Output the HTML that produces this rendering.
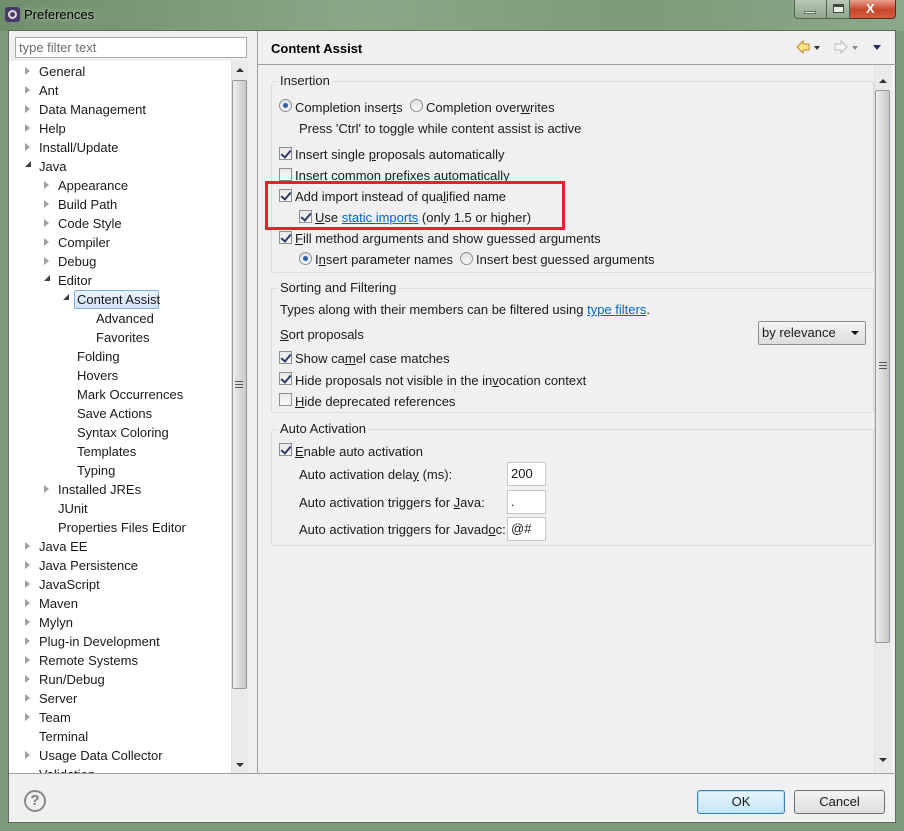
<!DOCTYPE html>
<html><head><meta charset="utf-8"><style>
*{margin:0;padding:0;box-sizing:border-box}
body{width:904px;height:831px;overflow:hidden;font-family:"Liberation Sans",sans-serif;font-size:13px;color:#1a1a1a;position:relative;background:#7e9a7c}
.a{position:absolute;white-space:nowrap}
.t{position:absolute;white-space:nowrap;line-height:19px;height:19px;margin-top:2px}
.ar{position:absolute;width:0;height:0;border-top:4px solid transparent;border-bottom:4px solid transparent;border-left:5px solid #a0a0a0}
.arx{position:absolute;width:0;height:0;border-left:6px solid transparent;border-bottom:6px solid #404040}
.cb{position:absolute;width:13px;height:13px;border:1px solid #8f8f8f;background:linear-gradient(#e8e8e8,#fafafa)}
.cb.c::after{content:"";position:absolute;left:3px;top:0px;width:4px;height:8px;border:solid #2a3a6a;border-width:0 2px 2px 0;transform:rotate(40deg)}
.rd{position:absolute;width:13px;height:13px;border:1px solid #8f8f8f;border-radius:50%;background:linear-gradient(#e0e0e0,#fafafa)}
.rd.c::after{content:"";position:absolute;left:3px;top:3px;width:5px;height:5px;border-radius:50%;background:#2d5fa8}
.grp{position:absolute;border:1px solid #d5dfe5;border-radius:3px}
.gl{position:absolute;background:#f0f0f0;padding:0 2px;line-height:14px;margin-top:1px}
u{text-decoration:underline}
.lk{color:#0066cc;text-decoration:underline}
.in{position:absolute;background:#fff;border:1px solid #c8c8c8;padding-left:3px;line-height:22px}
</style></head><body>
<div class="a" style="left:0;top:0;width:904px;height:31px;background:linear-gradient(90deg,#6f8e6b,#8aa887 40%,#7c9b78 70%,#8ca88a)"></div>
<div class="a" style="left:5px;top:7px;width:15px;height:15px;border-radius:3px;background:#4a3a6a"></div>
<div class="a" style="left:8px;top:10px;width:9px;height:9px;border-radius:50%;border:2px solid #ddd"></div>
<div class="a" style="left:24px;top:7px;font-size:13px;color:#000;text-shadow:0 0 6px #cfe0cc">Preferences</div>
<div class="a" style="left:794px;top:0;width:33px;height:19px;border:1px solid #51654f;border-top:0;border-radius:0 0 0 4px;background:linear-gradient(#b9c9b6,#8fa58c)"></div>
<div class="a" style="left:804px;top:11px;width:12px;height:3px;background:#e8eee6;border:1px solid #5d6f5b"></div>
<div class="a" style="left:827px;top:0;width:23px;height:19px;border:1px solid #51654f;border-top:0;border-left:0;background:linear-gradient(#b9c9b6,#8fa58c)"></div>
<div class="a" style="left:833px;top:4px;width:11px;height:9px;border:1px solid #3d4a3c;border-top-width:3px;background:#e8eee6"></div>
<div class="a" style="left:850px;top:0;width:46px;height:19px;border:1px solid #5a2a20;border-top:0;border-left:0;border-radius:0 0 4px 0;background:linear-gradient(#e9a08d,#c8452a 55%,#d06040)"></div>
<div class="a" style="left:866px;top:1px;font-size:13px;font-weight:bold;color:#fff">X</div>
<div class="a" style="left:8px;top:30px;width:888px;height:793px;background:#f0f0f0;border:1px solid #5e6e5c"></div>
<div class="a" style="left:15px;top:37px;width:232px;height:21px;background:#fff;border:1px solid #a9a9a9;padding:2px 3px;color:#6d6d6d">type filter text</div>
<div class="a" style="left:9px;top:61px;width:239px;height:712px;background:#fff;overflow:hidden">
<div class="a" style="left:222px;top:0;width:17px;height:712px;background:#eaeaea;border-left:1px solid #e0e0e0"></div>
<div class="a" style="left:223px;top:19px;width:15px;height:609px;border:1px solid #989898;border-radius:2px;background:linear-gradient(90deg,#eeeeee,#dadada 50%,#c8c8cc)"></div>
<div class="a" style="left:226px;top:320px;width:8px;height:7px;border-top:1px solid #555;border-bottom:1px solid #555"></div>
<div class="a" style="left:226px;top:323px;width:8px;height:1px;background:#555"></div>
<div class="a" style="left:227px;top:7px;width:0;height:0;border-left:4px solid transparent;border-right:4px solid transparent;border-bottom:4px solid #333"></div>
<div class="a" style="left:227px;top:702px;width:0;height:0;border-left:4px solid transparent;border-right:4px solid transparent;border-top:4px solid #333"></div>
<div class="a" style="left:65px;top:229px;width:85px;height:19px;border:1px solid #84acdd;border-radius:2px;background:linear-gradient(#eaf3fd,#d2e4f8)"></div>
</div>
<div class="a" style="left:9px;top:61px;width:222px;height:712px;overflow:hidden">
<div style="position:relative;left:-9px;top:-61px">
<div class="ar" style="left:25px;top:67px"></div><div class="t" style="left:39px;top:60px">General</div>
<div class="ar" style="left:25px;top:86px"></div><div class="t" style="left:39px;top:79px">Ant</div>
<div class="ar" style="left:25px;top:105px"></div><div class="t" style="left:39px;top:98px">Data Management</div>
<div class="ar" style="left:25px;top:124px"></div><div class="t" style="left:39px;top:117px">Help</div>
<div class="ar" style="left:25px;top:143px"></div><div class="t" style="left:39px;top:136px">Install/Update</div>
<div class="arx" style="left:25px;top:161px"></div><div class="t" style="left:39px;top:155px">Java</div>
<div class="ar" style="left:44px;top:181px"></div><div class="t" style="left:58px;top:174px">Appearance</div>
<div class="ar" style="left:44px;top:200px"></div><div class="t" style="left:58px;top:193px">Build Path</div>
<div class="ar" style="left:44px;top:219px"></div><div class="t" style="left:58px;top:212px">Code Style</div>
<div class="ar" style="left:44px;top:238px"></div><div class="t" style="left:58px;top:231px">Compiler</div>
<div class="ar" style="left:44px;top:257px"></div><div class="t" style="left:58px;top:250px">Debug</div>
<div class="arx" style="left:44px;top:275px"></div><div class="t" style="left:58px;top:269px">Editor</div>
<div class="arx" style="left:63px;top:294px"></div><div class="t" style="left:77px;top:288px">Content Assist</div>
<div class="t" style="left:96px;top:307px">Advanced</div>
<div class="t" style="left:96px;top:326px">Favorites</div>
<div class="t" style="left:77px;top:345px">Folding</div>
<div class="t" style="left:77px;top:364px">Hovers</div>
<div class="t" style="left:77px;top:383px">Mark Occurrences</div>
<div class="t" style="left:77px;top:402px">Save Actions</div>
<div class="t" style="left:77px;top:421px">Syntax Coloring</div>
<div class="t" style="left:77px;top:440px">Templates</div>
<div class="t" style="left:77px;top:459px">Typing</div>
<div class="ar" style="left:44px;top:485px"></div><div class="t" style="left:58px;top:478px">Installed JREs</div>
<div class="t" style="left:58px;top:497px">JUnit</div>
<div class="t" style="left:58px;top:516px">Properties Files Editor</div>
<div class="ar" style="left:25px;top:542px"></div><div class="t" style="left:39px;top:535px">Java EE</div>
<div class="ar" style="left:25px;top:561px"></div><div class="t" style="left:39px;top:554px">Java Persistence</div>
<div class="ar" style="left:25px;top:580px"></div><div class="t" style="left:39px;top:573px">JavaScript</div>
<div class="ar" style="left:25px;top:599px"></div><div class="t" style="left:39px;top:592px">Maven</div>
<div class="ar" style="left:25px;top:618px"></div><div class="t" style="left:39px;top:611px">Mylyn</div>
<div class="ar" style="left:25px;top:637px"></div><div class="t" style="left:39px;top:630px">Plug-in Development</div>
<div class="ar" style="left:25px;top:656px"></div><div class="t" style="left:39px;top:649px">Remote Systems</div>
<div class="ar" style="left:25px;top:675px"></div><div class="t" style="left:39px;top:668px">Run/Debug</div>
<div class="ar" style="left:25px;top:694px"></div><div class="t" style="left:39px;top:687px">Server</div>
<div class="ar" style="left:25px;top:713px"></div><div class="t" style="left:39px;top:706px">Team</div>
<div class="t" style="left:39px;top:725px">Terminal</div>
<div class="ar" style="left:25px;top:751px"></div><div class="t" style="left:39px;top:744px">Usage Data Collector</div>
<div class="t" style="left:39px;top:763px">Validation</div>
</div></div>
<div class="a" style="left:257px;top:31px;width:1px;height:742px;background:#a0a0a0"></div>
<div class="a" style="left:271px;top:41px;font-size:13px;font-weight:bold;color:#000">Content Assist</div>
<div class="a" style="left:258px;top:64px;width:638px;height:1px;background:#a0a0a0"></div>
<svg class="a" style="left:795px;top:40px" width="90" height="16">
<path d="M2 7 L8 1 L8 4 L14 4 L14 10 L8 10 L8 13 Z" fill="#fde58c" stroke="#c08a20"/>
<path d="M19 6 L25 6 L22 10 Z" fill="#333"/>
<path d="M52 7 L46 1 L46 4 L40 4 L40 10 L46 10 L46 13 Z" fill="#f4f4f4" stroke="#bbb"/>
<path d="M57 6 L63 6 L60 10 Z" fill="#888"/>
<path d="M78 5 L86 5 L82 10 Z" fill="#2a2a6a"/>
</svg>
<div class="a" style="left:874px;top:65px;width:17px;height:708px;background:#eaeaea;border-left:1px solid #e0e0e0"></div>
<div class="a" style="left:875px;top:90px;width:15px;height:553px;border:1px solid #989898;border-radius:2px;background:linear-gradient(90deg,#eeeeee,#dadada 50%,#c8c8cc)"></div>
<div class="a" style="left:879px;top:362px;width:8px;height:7px;border-top:1px solid #555;border-bottom:1px solid #555"></div>
<div class="a" style="left:879px;top:365px;width:8px;height:1px;background:#555"></div>
<div class="a" style="left:879px;top:79px;width:0;height:0;border-left:4px solid transparent;border-right:4px solid transparent;border-bottom:4px solid #333"></div>
<div class="a" style="left:879px;top:758px;width:0;height:0;border-left:4px solid transparent;border-right:4px solid transparent;border-top:4px solid #333"></div>
<div class="grp" style="left:271px;top:81px;width:603px;height:192px"></div>
<div class="gl" style="left:278px;top:73px">Insertion</div>
<div class="rd c" style="left:279px;top:99px"></div><div class="t" style="left:295px;top:96px">Completion inser<u>t</u>s</div>
<div class="rd" style="left:410px;top:99px"></div><div class="t" style="left:426px;top:96px">Completion over<u>w</u>rites</div>
<div class="t" style="left:299px;top:117px">Press 'Ctrl' to toggle while content assist is active</div>
<div class="cb c" style="left:279px;top:147px"></div><div class="t" style="left:295px;top:143px">Insert single <u>p</u>roposals automatically</div>
<div class="cb" style="left:279px;top:168px"></div><div class="t" style="left:295px;top:164px"><u>I</u>nsert common prefixes automatically</div>
<div class="cb c" style="left:279px;top:189px"></div><div class="t" style="left:295px;top:185px">Add import instead of qua<u>l</u>ified name</div>
<div class="cb c" style="left:299px;top:210px"></div><div class="t" style="left:315px;top:206px"><u>U</u>se <span class="lk">static imports</span> (only 1.5 or higher)</div>
<div class="cb c" style="left:279px;top:231px"></div><div class="t" style="left:295px;top:227px"><u>F</u>ill method arguments and show guessed arguments</div>
<div class="rd c" style="left:299px;top:252px"></div><div class="t" style="left:315px;top:248px">I<u>n</u>sert parameter names</div>
<div class="rd" style="left:460px;top:252px"></div><div class="t" style="left:476px;top:248px">Insert best <u>g</u>uessed arguments</div>
<div class="a" style="left:265px;top:181px;width:300px;height:49px;border:3px solid #e8202a"></div>
<div class="grp" style="left:271px;top:288px;width:603px;height:125px"></div>
<div class="gl" style="left:278px;top:280px">Sorting and Filtering</div>
<div class="t" style="left:280px;top:298px">Types along with their members can be filtered using <span class="lk">type filters</span>.</div>
<div class="t" style="left:280px;top:323px"><u>S</u>ort proposals</div>
<div class="a" style="left:758px;top:321px;width:108px;height:24px;border:1px solid #8f8f8f;border-radius:2px;background:linear-gradient(#f4f4f4,#dcdcdc);padding-left:3px;line-height:22px">by relevance</div>
<div class="a" style="left:851px;top:331px;width:0;height:0;border-left:4px solid transparent;border-right:4px solid transparent;border-top:4px solid #111"></div>
<div class="cb c" style="left:279px;top:351px"></div><div class="t" style="left:295px;top:347px">Show ca<u>m</u>el case matches</div>
<div class="cb c" style="left:279px;top:372px"></div><div class="t" style="left:295px;top:369px">Hide proposals not visible in the in<u>v</u>ocation context</div>
<div class="cb" style="left:279px;top:393px"></div><div class="t" style="left:295px;top:390px"><u>H</u>ide deprecated references</div>
<div class="grp" style="left:271px;top:429px;width:603px;height:117px"></div>
<div class="gl" style="left:278px;top:421px">Auto Activation</div>
<div class="cb c" style="left:279px;top:443px"></div><div class="t" style="left:295px;top:440px"><u>E</u>nable auto activation</div>
<div class="t" style="left:299px;top:463px">Auto activation dela<u>y</u> (ms):</div>
<div class="in" style="left:507px;top:462px;width:39px;height:24px">200</div>
<div class="t" style="left:299px;top:491px">Auto activation triggers for <u>J</u>ava:</div>
<div class="in" style="left:507px;top:490px;width:39px;height:24px">.</div>
<div class="t" style="left:299px;top:518px">Auto activation triggers for Javad<u>o</u>c:</div>
<div class="in" style="left:507px;top:517px;width:39px;height:24px">@#</div>
<div class="a" style="left:9px;top:773px;width:887px;height:1px;background:#a0a0a0"></div>
<div class="a" style="left:24px;top:790px;width:22px;height:22px;border:2px solid #8a8a8a;border-radius:50%;text-align:center;font-weight:bold;font-size:15px;line-height:18px;color:#7a7a7a">?</div>
<div class="a" style="left:697px;top:790px;width:88px;height:24px;border:1px solid #3c7fb1;border-radius:3px;background:linear-gradient(#e8f5fc,#c4e5f6);text-align:center;line-height:22px;box-shadow:inset 0 0 0 1px #aee0f8">OK</div>
<div class="a" style="left:794px;top:790px;width:91px;height:24px;border:1px solid #707070;border-radius:3px;background:linear-gradient(#f2f2f2,#dedede);text-align:center;line-height:22px">Cancel</div>
</body></html>
